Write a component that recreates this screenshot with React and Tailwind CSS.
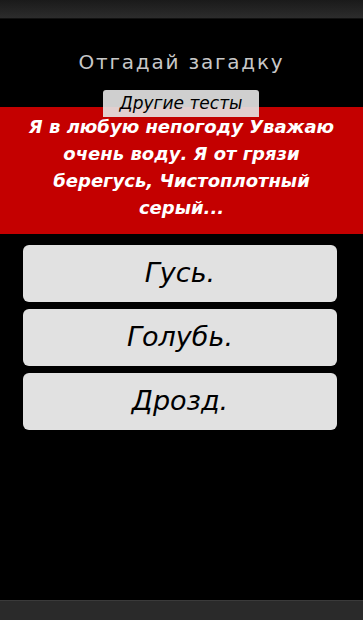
import { useState } from 'react';

const answers = ['Гусь.', 'Голубь.', 'Дрозд.'];

const App = () => {
  const [picked, setPicked] = useState(null);

  return (
    <div className="h-[620px] w-full flex flex-col bg-black overflow-hidden">
      {/* status bar */}
      <div className="h-[19px] bg-gradient-to-b from-[#1a1a1a] to-[#2c2c2c] border-b border-[#111]" />

      <div className="flex-1 flex flex-col">
        <h1
          className="mt-[31px] h-[24px] leading-[24px] text-center text-[20px] tracking-[1.8px] text-[#c8c8c8]"
          style={{ fontFamily: '"DejaVu Sans", sans-serif' }}
        >
          Отгадай загадку
        </h1>

        <div className="mt-[16px] flex justify-center relative z-10 -mb-[10px]">
          <button
            className="ml-[-1px] w-[156px] h-[27px] rounded-t-[3px] bg-[#e6e6e6]/90 text-[17px] italic text-black leading-[27px]"
            style={{ fontFamily: '"DejaVu Sans", sans-serif' }}
          >
            Другие тесты
          </button>
        </div>

        <div
          className="h-[127px] bg-[#c40000] pt-[6px] px-[20px] text-center text-white text-[18px] font-bold italic leading-[27px]"
          style={{ fontFamily: '"DejaVu Sans", sans-serif' }}
        >
          Я в любую непогоду Уважаю очень воду. Я от грязи берегусь, Чистоплотный серый...
        </div>

        <div className="mt-[11px] ml-[23px] w-[314px] flex flex-col gap-[7px]">
          {answers.map((a, i) => (
            <button
              key={a}
              onClick={() => setPicked(i)}
              className={
                'h-[57px] rounded-[6px] text-[27px] italic text-black ' +
                (picked === i ? 'bg-[#cfcfcf]' : 'bg-[#e1e1e1]')
              }
              style={{ fontFamily: '"DejaVu Sans", sans-serif' }}
            >
              {a}
            </button>
          ))}
        </div>
      </div>

      {/* nav bar */}
      <div className="h-[20px] bg-[#2a2a2a] border-t border-[#3a3a3a]" />
    </div>
  );
};

export default App;
